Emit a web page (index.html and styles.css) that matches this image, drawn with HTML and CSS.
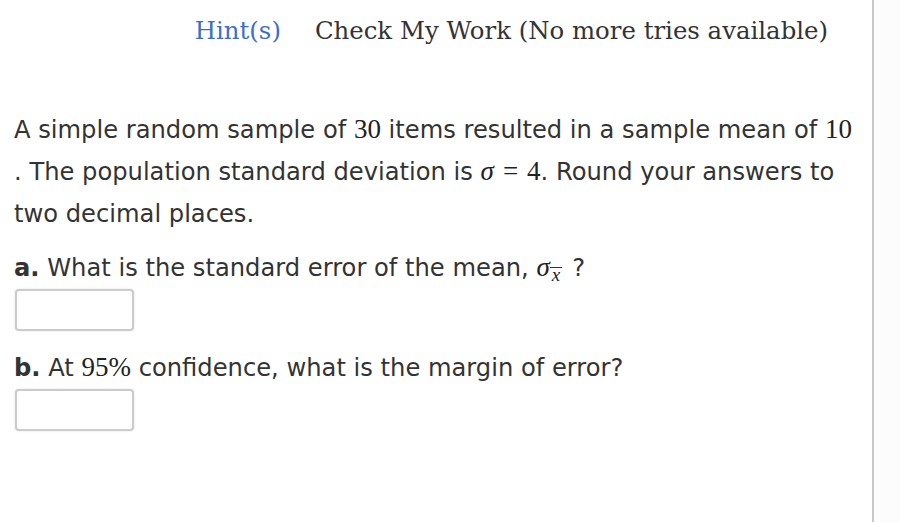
FILE: index.html
```html
<!DOCTYPE html>
<html>
<head>
<meta charset="utf-8">
<link rel="stylesheet" href="styles.css">
</head>
<body>
<div class="page">
  <main class="content">
    <div class="toolbar">
      <span class="hint">Hint(s)</span>
      <span class="check">Check My Work (No more tries available)</span>
    </div>
    <p class="problem">A simple random sample of <span class="m">30</span> items resulted in a sample mean of <span class="m">10</span> . The population standard deviation is <span class="m"><i>σ</i><span class="eq">=</span>4</span>. Round your answers to two decimal places.</p>
    <div class="part">
      <p class="q"><b>a.</b> What is the standard error of the mean, <span class="m"><i>σ</i><span class="xbar"><i>x</i></span></span>?</p>
      <div class="box"></div>
    </div>
    <div class="part">
      <p class="q"><b>b.</b> At <span class="m">95%</span> confidence, what is the margin of error?</p>
      <div class="box"></div>
    </div>
  </main>
  <aside class="side"></aside>
</div>
</body>
</html>
```
FILE: styles.css
```css
html, body {
  margin: 0;
  padding: 0;
  background: #ffffff;
}
.page {
  display: flex;
  height: 522px;
}
.content {
  box-sizing: border-box;
  border-right: 2px solid #c8c8c8;
  padding: 0 12px 0 14px;
  width: 874px;
  font-family: "DejaVu Sans", Verdana, sans-serif;
  color: #333333;
  font-size: 24.2px;
}
.side {
  flex: 1;
  background: #fcfcfc;
}
.toolbar {
  display: flex;
  justify-content: flex-end;
  gap: 34px;
  padding: 14px 32px 0 0;
  font-family: "DejaVu Serif", Georgia, serif;
  font-size: 24.4px;
  line-height: 34px;
}
.hint {
  color: #3b6fc7;
}
.check {
  color: #333333;
}
.problem {
  margin: 61px 0 0 0;
  line-height: 42px;
}
.m {
  font-family: "Liberation Serif", "Times New Roman", serif;
  font-size: 27px;
  line-height: 1;
  color: #222;
}
.m i {
  font-style: italic;
}
.eq {
  margin: 0 9px;
}
.xbar {
  display: inline-block;
  font-size: 19px;
  line-height: 14px;
  border-top: 1px solid #333;
  padding: 0 2px;
  vertical-align: -5px;
  margin-right: 10px;
}
.part .q {
  margin: 12px 0 0 0;
  line-height: 42px;
}
.part + .part .q {
  margin-top: 16px;
}
.box {
  width: 115px;
  height: 38px;
  border: 2px solid #cccccc;
  border-radius: 4px;
  box-shadow: 0 0 2px rgba(0,0,0,0.15);
  margin: 0 0 0 1px;
  background: #fff;
}
```
